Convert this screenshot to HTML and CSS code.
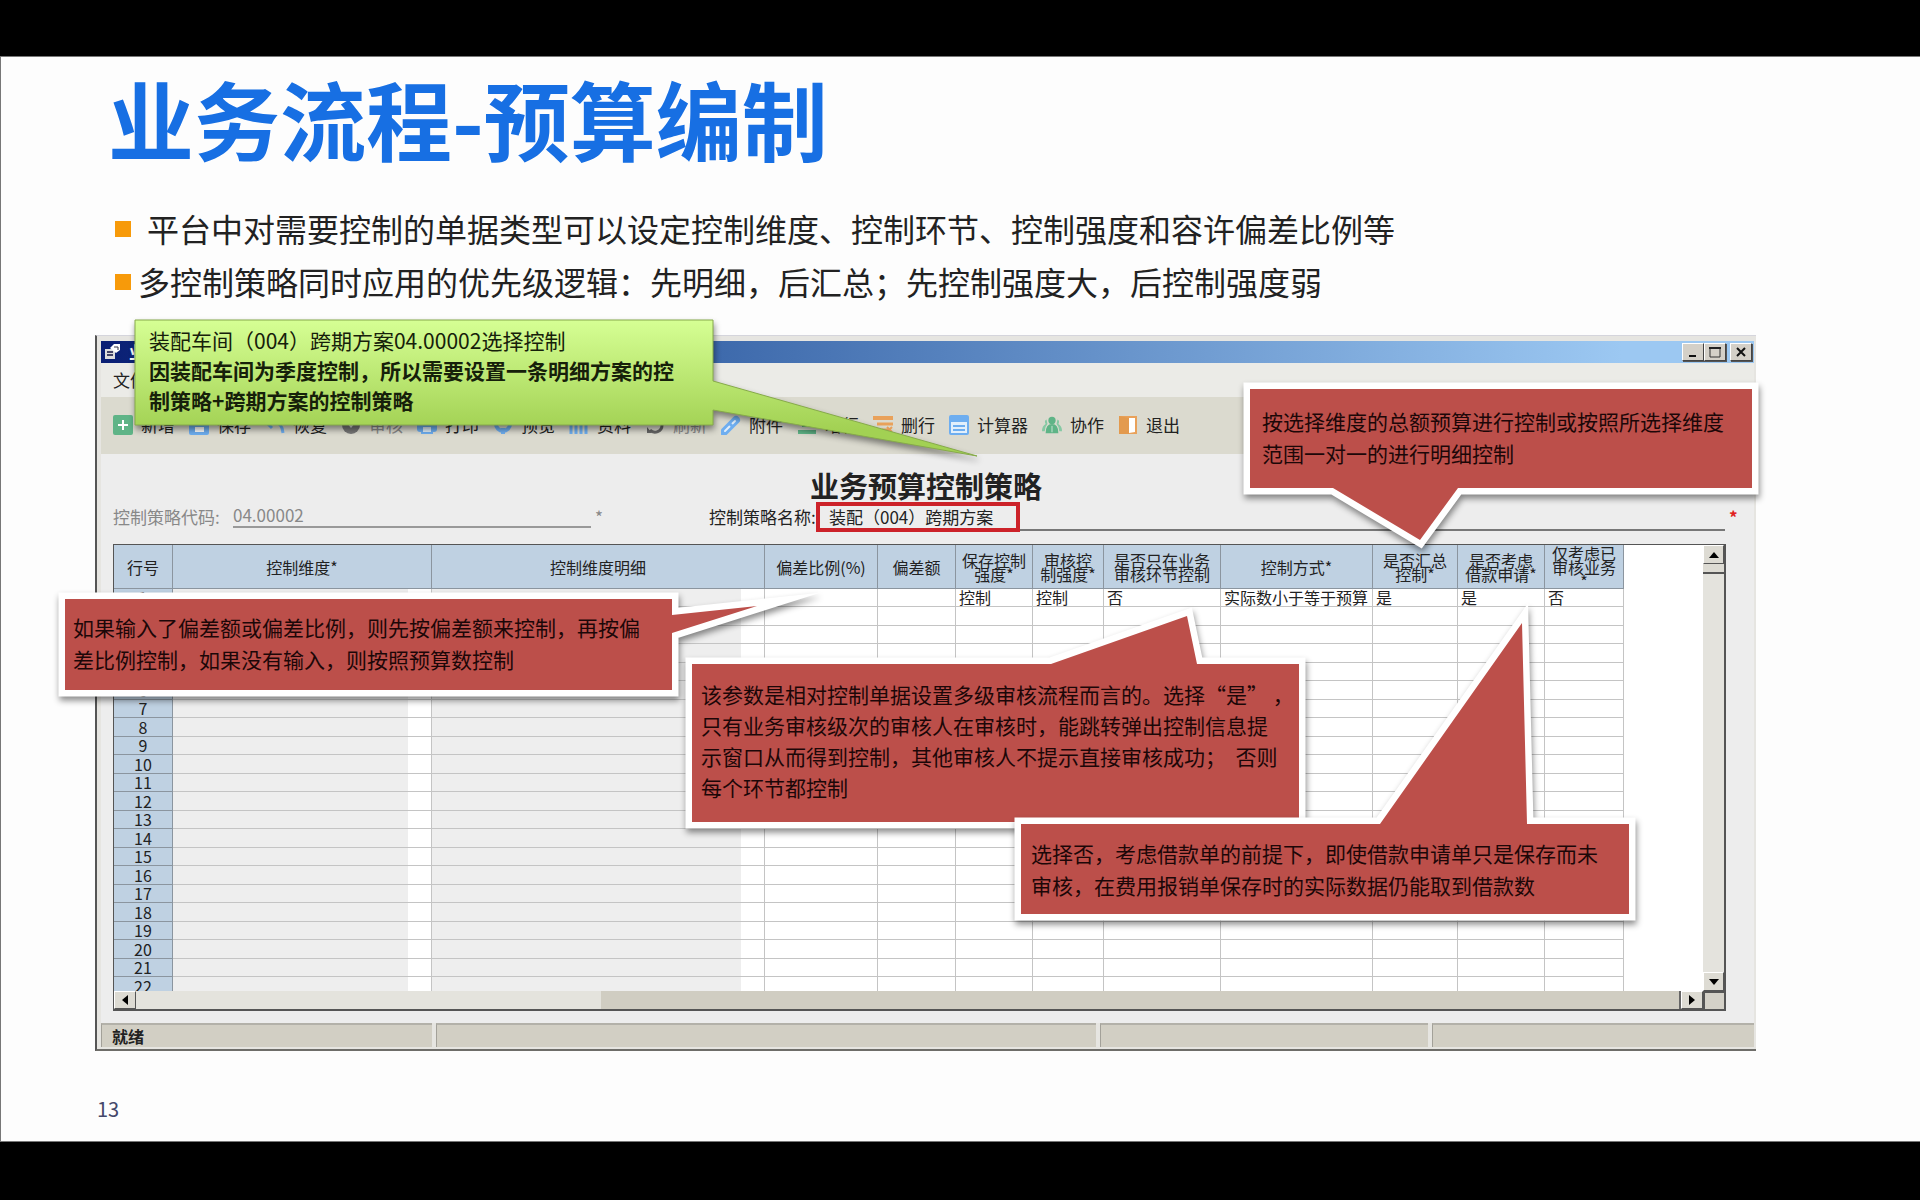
FILE: index.html
```html
<!DOCTYPE html>
<html lang="zh-CN">
<head>
    <meta charset="UTF-8">
    <meta name="viewport" content="width=device-width, initial-scale=1.0">
    <title>业务流程-预算编制</title>
    <link rel="stylesheet" href="styles.css">
</head>
<body>
    <main class="slide">
        <h1 class="slide-title">业务流程-预算编制</h1>
        <ul class="points">
            <li class="spaced">平台中对需要控制的单据类型可以设定控制维度、控制环节、控制强度和容许偏差比例等</li>
            <li>多控制策略同时应用的优先级逻辑：先明细，后汇总；先控制强度大，后控制强度弱</li>
        </ul>

        <!-- Application window -->
        <section class="window">
            <header class="titlebar">
                <svg class="app-icon" viewBox="0 0 20 18"><path d="M2 6h10v10H2z" fill="#ddd"/><path d="M4 9h6M4 12h6" stroke="#446" stroke-width="2"/><path d="M7 5l4-4h6v6l-4 3z" fill="#fff"/><path d="M11 4h4v3" fill="none" stroke="#334" stroke-width="1"/></svg>
                <span class="titlebar-text">业务预算控制策略</span>
                <button class="win-btn" aria-label="最小化"><svg viewBox="0 0 16 14"><path d="M4 11h7" stroke="#111" stroke-width="2"/></svg></button>
                <button class="win-btn" aria-label="最大化"><svg viewBox="0 0 16 14"><path d="M3 3h10v9H3z" fill="none" stroke="#333" stroke-width="1"/><path d="M2 3h12" stroke="#222" stroke-width="2"/></svg></button>
                <button class="win-btn close" aria-label="关闭"><svg viewBox="0 0 16 14"><path d="M4 3l8 8M12 3l-8 8" stroke="#111" stroke-width="2"/></svg></button>
            </header>
            <nav class="menubar"><button>文件(F)</button></nav>
            <div class="toolbar">
                <button><svg viewBox="0 0 20 20"><rect width="20" height="20" rx="2" fill="#5fb487"/><path d="M10 5v10M5 10h10" stroke="#fff" stroke-width="2"/></svg>新增</button>
                <button><svg viewBox="0 0 20 20"><rect width="20" height="20" rx="2" fill="#6eaef0"/><path d="M4 2h12v6H4zM6 12h9v5H6z" fill="#fff"/></svg>保存</button>
                <button><svg viewBox="0 0 20 20"><path d="M7 3L2 8l5 5M2 8h9q6 0 7 10" fill="none" stroke="#6eaef0" stroke-width="3"/></svg>恢复</button>
                <button class="off"><svg viewBox="0 0 20 20"><circle cx="10" cy="10" r="9" fill="#777"/><path d="M6 8l4 5 4-5z" fill="#ddd"/></svg>审核</button>
                <button><svg viewBox="0 0 20 20"><path d="M5 1h10v5H5z" fill="#6eaef0"/><rect y="6" width="20" height="11" rx="3" fill="#6eaef0"/><path d="M5 11h10v7H5z" fill="#dfeefa" stroke="#6eaef0" stroke-width="2"/></svg>打印</button>
                <button><svg viewBox="0 0 20 20"><circle cx="10" cy="9" r="7" fill="none" stroke="#6eaef0" stroke-width="4"/><path d="M10 13v6" stroke="#6eaef0" stroke-width="4"/></svg>预览</button>
                <button><svg viewBox="0 0 20 20"><path d="M2 8v11M7 3v16M12 10v9M17 5v14" stroke="#6eaef0" stroke-width="3"/></svg>资料</button>
                <button class="off"><svg viewBox="0 0 20 20"><path d="M3 10a7 7 0 0 1 12-5M17 10a7 7 0 0 1-12 5" fill="none" stroke="#666" stroke-width="3"/><path d="M13 2h5v6zM7 18H2v-6z" fill="#666"/></svg>刷新</button>
                <button><svg viewBox="0 0 20 20"><path d="M3 17L15 5" stroke="#6eaef0" stroke-width="8" stroke-linecap="round"/><path d="M4 16L14 6" stroke="#e2effb" stroke-width="2" stroke-linecap="round"/><path d="M8 8l4 4" stroke="#6eaef0" stroke-width="3"/></svg>附件</button>
                <button><svg viewBox="0 0 20 20"><path d="M1 3h18M1 17h18M5 10h10" stroke="#5fb487" stroke-width="4"/></svg>增行</button>
                <button><svg viewBox="0 0 20 20"><path d="M0 3h20" stroke="#e9a15a" stroke-width="4"/><path d="M4 9h16M9 15h6" stroke="#e9a15a" stroke-width="3"/><path d="M14 12l5 5m0-5l-5 5" stroke="#e9a15a" stroke-width="2"/></svg>删行</button>
                <button><svg viewBox="0 0 20 20"><rect x="1" y="1" width="18" height="18" rx="1" fill="#e2effb" stroke="#6eaef0" stroke-width="2"/><path d="M1 2h18v5H1z" fill="#6eaef0"/><path d="M4 11h12M4 15h12" stroke="#6eaef0" stroke-width="2"/></svg>计算器</button>
                <button><svg viewBox="0 0 22 20"><circle cx="11" cy="5" r="4" fill="#5fb487"/><path d="M4 19q0-10 7-10t7 10z" fill="#5fb487"/><path d="M5 4q-3 1-1 5-4 2-4 8h3q0-5 3-8zM17 4q3 1 1 5 4 2 4 8h-3q0-5-3-8z" fill="#86c9a4"/><path d="M11 11v7" stroke="#cfe8da" stroke-width="1"/></svg>协作</button>
                <button><svg viewBox="0 0 20 20"><path d="M1 1h18v18H1z" fill="#e9a15a"/><path d="M11 3h6v14l-6 1z" fill="#fff"/><path d="M1 1l10 2v16H1z" fill="#e39a4e"/></svg>退出</button>
            </div>

            <div class="window-body">
                <h2 class="form-title">业务预算控制策略</h2>
                <form class="form-row">
                    <label class="muted" for="code">控制策略代码:</label>
                    <input class="code muted" id="code" type="text" value="04.00002" readonly>
                    <span class="star muted">*</span>
                    <label for="name">控制策略名称:</label>
                    <div class="name-field">
                        <input id="name" type="text" value="装配（004）跨期方案">
                        <span class="highlight"></span>
                    </div>
                    <span class="star required">*</span>
                </form>

                <div class="sheet">
                    <div class="sheet-view">
                        <table>
                            <colgroup>
                                <col class="c-no"><col class="c-dim"><col class="c-detail"><col class="c-rate"><col class="c-diff"><col class="c-save"><col class="c-audit"><col class="c-node"><col class="c-mode"><col class="c-sum"><col class="c-loan"><col class="c-done">
                            </colgroup>
                            <thead>
                                <tr>
                                    <th>行号</th>
                                    <th>控制维度*</th>
                                    <th>控制维度明细</th>
                                    <th>偏差比例(%)</th>
                                    <th>偏差额</th>
                                    <th>保存控制<br>强度*</th>
                                    <th>审核控<br>制强度*</th>
                                    <th>是否只在业务<br>审核环节控制</th>
                                    <th>控制方式*</th>
                                    <th>是否汇总<br>控制*</th>
                                    <th>是否考虑<br>借款申请*</th>
                                    <th>仅考虑已<br>审核业务<br>*</th>
                                </tr>
                            </thead>
                            <tbody id="rows">
                                <tr><th>1</th><td></td><td></td><td></td><td></td><td>控制</td><td>控制</td><td>否</td><td>实际数小于等于预算</td><td>是</td><td>是</td><td>否</td></tr>
                            </tbody>
                        </table>
                    </div>
                    <div class="vscroll">
                        <button aria-label="向上"><svg viewBox="0 0 10 6"><path d="M0 6l5-6 5 6z"/></svg></button>
                        <span class="vthumb"></span>
                        <span class="track"></span>
                        <button aria-label="向下"><svg viewBox="0 0 10 6"><path d="M0 0h10L5 6z"/></svg></button>
                    </div>
                    <div class="hscroll">
                        <button aria-label="向左"><svg viewBox="0 0 6 10"><path d="M6 0v10L0 5z"/></svg></button>
                        <span class="htrack"></span>
                        <span class="hthumb"></span>
                        <button aria-label="向右"><svg viewBox="0 0 6 10"><path d="M0 0v10l6-5z"/></svg></button>
                    </div>
                    <div class="corner"></div>
                </div>
            </div>

            <footer class="statusbar">
                <span>就绪</span><span></span><span></span><span></span>
            </footer>
        </section>

        <p class="page-number">13</p>

        <!-- Callouts over the window -->
        <aside class="callout green">
            <svg viewBox="0 0 578 105">
                <defs>
                    <linearGradient id="lime" gradientUnits="userSpaceOnUse" x1="0" y1="0" x2="0" y2="110">
                        <stop offset="0" stop-color="#d6ff94"/>
                        <stop offset="1" stop-color="#a2d153"/>
                    </linearGradient>
                </defs>
                <path d="M0 0H578V61L842 136L578 90V105H0Z"/>
            </svg>
            <p>装配车间（004）跨期方案04.00002选择控制<br><strong>因装配车间为季度控制，所以需要设置一条明细方案的控<br>制策略+跨期方案的控制策略</strong></p>
        </aside>
        <aside class="callout red sum">
            <svg viewBox="0 0 502 99"><path d="M0 0H502V99H208L170 151L83 99H0Z"/></svg>
            <p>按选择维度的总额预算进行控制或按照所选择维度<br>范围一对一的进行明细控制</p>
        </aside>
        <aside class="callout red rate">
            <svg viewBox="0 0 607 91"><path d="M0 0H607V16L692 7L607 34V91H0Z"/></svg>
            <p>如果输入了偏差额或偏差比例，则先按偏差额来控制，再按偏<br>差比例控制，如果没有输入，则按照预算数控制</p>
        </aside>
        <aside class="callout red node">
            <svg viewBox="0 0 607 158"><path d="M0 0H359L495 -48L505 0H607V158H0Z"/></svg>
            <p>该参数是相对控制单据设置多级审核流程而言的。选择“是” ，<br>只有业务审核级次的审核人在审核时，能跳转弹出控制信息提<br>示窗口从而得到控制，其他审核人不提示直接审核成功；&nbsp;&nbsp;否则<br>每个环节都控制</p>
        </aside>
        <aside class="callout red loan">
            <svg viewBox="0 0 608 90"><path d="M0 0H359L501 -201L506 0H608V90H0Z"/></svg>
            <p>选择否，考虑借款单的前提下，即使借款申请单只是保存而未<br>审核，在费用报销单保存时的实际数据仍能取到借款数</p>
        </aside>
    </main>

    <script>
        // Fill the sheet with empty numbered rows
        const rows = document.getElementById('rows');
        for (let i = 2; i <= 22; i++) {
            const row = document.createElement('tr');
            row.innerHTML = '<th>' + i + '</th>' + '<td></td>'.repeat(11);
            rows.appendChild(row);
        }
    </script>
</body>
</html>
```
FILE: styles.css
```css
* {
    margin: 0;
    padding: 0;
    box-sizing: border-box;
}

body {
    font-family: 'Noto Sans CJK SC', 'Noto Sans', sans-serif;
    background: #000;
    color: #222;
    min-height: 100vh;
    padding: 56px 0;
    display: flex;
    align-items: flex-start;
    text-spacing-trim: space-all;
}

button,
input {
    font: inherit;
    color: inherit;
    background: none;
    border: none;
    outline: none;
}

.slide {
    position: relative;
    flex: 1;
    min-width: 0;
    background: #fdfdfd;
    border: 1px solid #777;
    border-right: none;
}

.slide-title {
    margin: 18px 0 0 107px;
    font-size: 86px;
    line-height: 86px;
    font-weight: 700;
    color: #176fe3;
}

.points {
    list-style: none;
    margin: 41px 0 27px 114px;
    font-size: 32px;
    line-height: 53px;
}

.points li {
    display: flex;
    align-items: center;
    gap: 7px;
    white-space: nowrap;
}

.points li.spaced {
    gap: 16px;
}

.points li::before {
    content: '';
    width: 16px;
    height: 16px;
    background: #f79a0a;
}

/* Application window */
.window {
    margin: 0 164px 0 94px;
    padding: 5px 2px 2px 4px;
    background: #e6e5e1;
    border-left: 2px solid #555;
    border-top: 1px solid #d5d5dc;
    border-bottom: 2px solid #6e6d69;
    font-size: 17px;
}

.titlebar {
    display: flex;
    align-items: center;
    height: 22px;
    padding: 0 2px;
    background: linear-gradient(to right, #0a1f74, #3a66a9 35%, #9cc8f2 92%);
    color: #fff;
}

.app-icon {
    width: 20px;
    height: 18px;
    margin-right: 6px;
}

.titlebar-text {
    flex: 1;
    font-weight: 700;
    line-height: 22px;
}

.win-btn {
    width: 22px;
    height: 18px;
    background: #d4d0c8;
    border: 1px solid;
    border-color: #fff #444 #444 #fff;
    box-shadow: 1px 1px 0 #555;
}

.win-btn.close {
    margin-left: 4px;
}

.win-btn svg {
    display: block;
    width: 16px;
    height: 14px;
    margin: 0 auto;
}

.menubar {
    height: 34px;
    padding: 0 12px;
    background: #ebebe7;
    line-height: 34px;
}

.toolbar {
    display: flex;
    align-items: center;
    gap: 14px;
    height: 57px;
    padding: 0 12px 2px;
    background: #dbdacf;
}

.toolbar button {
    display: flex;
    align-items: center;
    gap: 8px;
    white-space: nowrap;
}

.toolbar svg {
    width: 20px;
    height: 20px;
}

.toolbar .off {
    color: #888;
}

.window-body {
    padding: 13px 15px 12px 12px;
    background: #ededed;
}

.form-title {
    font-size: 29px;
    line-height: 36px;
    font-weight: 700;
    text-align: center;
}

.form-row {
    display: flex;
    height: 27px;
    line-height: 27px;
}

.form-row label {
    width: 120px;
}

.form-row input {
    height: 27px;
    border-bottom: 2px solid #777;
}

.form-row .muted {
    color: #888;
}

.form-row .code {
    width: 358px;
    height: 25px;
    border-bottom-color: #999;
}

.star {
    width: 14px;
    padding-left: 4px;
}

.star.muted {
    width: 118px;
}

.star.required {
    color: #e02020;
    font-weight: 700;
}

.name-field {
    position: relative;
    flex: 1;
}

.name-field input {
    width: 100%;
}

.highlight {
    position: absolute;
    left: -13px;
    top: -1px;
    width: 204px;
    height: 30px;
    border: 4px solid #cc2229;
}

/* Sheet with its scroll bars */
.sheet {
    display: grid;
    grid-template-columns: 1fr 21px;
    grid-template-rows: 446px 18px;
    margin: 14px 13px 0 0;
    background: #fff;
    border: 1px solid #555;
    border-width: 1px 2px 2px 1px;
}

.sheet-view {
    overflow: hidden;
}

table {
    width: 1510px;
    table-layout: fixed;
    border-collapse: separate;
    border-spacing: 0;
    font-size: 16px;
}

.c-no { width: 59px; }
.c-dim { width: 259px; }
.c-detail { width: 333px; }
.c-rate { width: 113px; }
.c-diff { width: 78px; }
.c-save { width: 77px; }
.c-audit { width: 71px; }
.c-node { width: 117px; }
.c-mode { width: 152px; }
.c-sum { width: 85px; }
.c-loan { width: 87px; }
.c-done { width: 79px; }

th,
td {
    border-right: 1px solid #c4c4c4;
    border-bottom: 1px solid #c4c4c4;
    overflow: hidden;
    white-space: nowrap;
}

th {
    background: #bfd1e2;
    border-color: #8b959f;
    font-weight: 400;
    text-align: center;
}

thead th {
    height: 44px;
    line-height: 14px;
}

tbody tr {
    height: 18px;
    line-height: 17px;
}

tbody tr:nth-child(even) {
    height: 19px;
}

td {
    padding-left: 3px;
}

td:nth-child(2),
td:nth-child(3) {
    background: linear-gradient(to left, #fff 23px, #eee 23px);
}

.vscroll,
.hscroll {
    display: flex;
    background: #e4e3dd;
}

.vscroll {
    flex-direction: column;
}

.sheet button {
    display: flex;
    align-items: center;
    justify-content: center;
    background: #dddbd3;
    border: 1px solid;
    border-color: #fff #555 #555 #fff;
}

.vscroll button {
    height: 19px;
}

.vscroll svg {
    width: 10px;
    height: 6px;
}

.vthumb {
    height: 10px;
    background: #dddbd3;
    border-bottom: 2px solid #555;
}

.track {
    flex: 1;
}

.hscroll button {
    width: 22px;
}

.hscroll svg {
    width: 6px;
    height: 10px;
}

.htrack {
    flex: 466;
}

.hthumb {
    flex: 1080;
    background: #d0cdc2;
    border-right: 2px solid #666;
}

.corner {
    background: #d4d1c8;
    border-left: 2px solid #555;
    border-top: 2px solid #555;
}

.statusbar {
    display: grid;
    grid-template-columns: 331fr 660fr 328fr 322fr;
    gap: 4px;
    height: 24px;
    font-size: 16px;
    line-height: 22px;
    font-weight: 700;
}

.statusbar span {
    padding-left: 10px;
    background: #d2cfc4;
    border-top: 2px solid #b3b1a9;
    border-left: 1px solid #a3a199;
}

.page-number {
    margin: 43px 0 17px 96px;
    font-size: 20px;
    line-height: 30px;
    color: #44486a;
}

/* Callouts */
.callout {
    position: absolute;
    font-size: 21px;
    line-height: 32px;
    white-space: nowrap;
}

.callout svg {
    position: absolute;
    inset: 0;
    width: 100%;
    height: 100%;
    overflow: visible;
    filter: drop-shadow(1px 4px 3px rgba(0, 0, 0, 0.45));
}

.callout p {
    position: relative;
    color: #1c0708;
}

.red path {
    fill: #bc4f4a;
    stroke: #fff;
    stroke-width: 13px;
    stroke-miterlimit: 10;
    paint-order: stroke;
}

.green {
    left: 134px;
    top: 263px;
    width: 578px;
    height: 105px;
    padding: 5px 14px;
    line-height: 30px;
}

.green path {
    fill: url(#lime);
    stroke: #86aa4a;
    stroke-width: 1px;
}

.green p {
    color: #16200a;
}

.sum {
    left: 1249px;
    top: 332px;
    width: 502px;
    height: 99px;
    padding: 16px 12px;
}

.rate {
    left: 64px;
    top: 542px;
    width: 607px;
    height: 91px;
    padding: 12px 8px;
}

.node {
    left: 691px;
    top: 607px;
    width: 607px;
    height: 158px;
    padding: 15px 9px;
    line-height: 31px;
}

.loan {
    left: 1020px;
    top: 767px;
    width: 608px;
    height: 90px;
    padding: 13px 10px;
}
```
